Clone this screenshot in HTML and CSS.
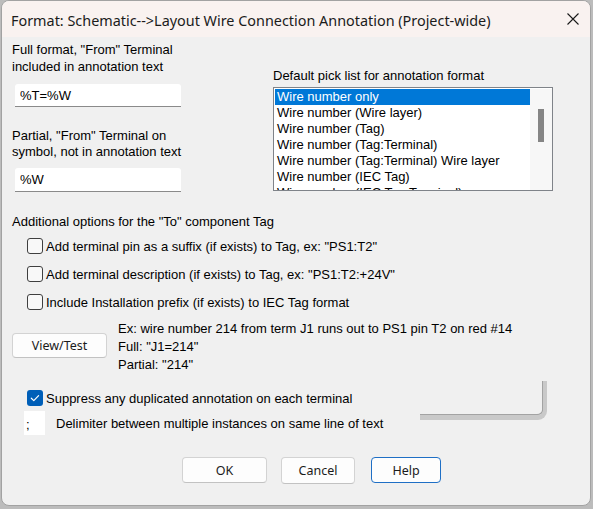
FILE: index.html
```html
<!DOCTYPE html>
<html>
<head>
<meta charset="utf-8">
<link rel="stylesheet" href="styles.css">
<title>Wire Connection Annotation</title>
</head>
<body>
<div class="window">
  <div class="titlebar">
    <span class="title">Format: Schematic--&gt;Layout Wire Connection Annotation (Project-wide)</span>
    <svg class="close" width="12" height="12" viewBox="0 0 12 12"><path d="M0.5 0.5 L11.5 11.5 M11.5 0.5 L0.5 11.5" stroke="#1a1a1a" stroke-width="1.1" fill="none"/></svg>
  </div>

  <div class="content">
    <div class="formats">
      <div class="col-left">
        <div class="label label-full">Full format, "From" Terminal<br>included in annotation text</div>
        <input class="field field-full" type="text" value="%T=%W">
        <div class="label label-partial">Partial, "From" Terminal on<br>symbol, not in annotation text</div>
        <input class="field field-partial" type="text" value="%W">
      </div>
      <div class="col-right">
        <div class="label label-pick">Default pick list for annotation format</div>
        <div class="listbox">
          <div class="rows">
            <div class="row selected">Wire number only</div>
            <div class="row">Wire number (Wire layer)</div>
            <div class="row">Wire number (Tag)</div>
            <div class="row">Wire number (Tag:Terminal)</div>
            <div class="row">Wire number (Tag:Terminal) Wire layer</div>
            <div class="row">Wire number (IEC Tag)</div>
            <div class="row">Wire number (IEC Tag:Terminal)</div>
          </div>
          <div class="scrolltrack"><div class="thumb"></div></div>
        </div>
      </div>
    </div>

    <div class="label label-options">Additional options for the "To" component Tag</div>
    <div class="options">
      <label class="check-row"><span class="box"></span><span>Add terminal pin as a suffix (if exists) to Tag, ex: "PS1:T2"</span></label>
      <label class="check-row"><span class="box"></span><span>Add terminal description (if exists) to Tag, ex: "PS1:T2:+24V"</span></label>
      <label class="check-row"><span class="box"></span><span>Include Installation prefix (if exists) to IEC Tag format</span></label>
    </div>

    <div class="example">
      <button class="btn btn-view">View/Test</button>
      <div class="example-text">
        <div>Ex: wire number 214 from term J1 runs out to PS1 pin T2 on red #14</div>
        <div>Full: "J1=214"</div>
        <div>Partial: "214"</div>
      </div>
    </div>

    <div class="lower">
      <div class="lower-left">
        <label class="check-row check-suppress">
          <span class="box checked"><svg width="16" height="16" viewBox="0 0 16 16"><path d="M4.3 8.2 L6.8 10.6 L11.6 5.6" stroke="#fff" stroke-width="1.2" fill="none" stroke-linecap="round" stroke-linejoin="round"/></svg></span>
          <span>Suppress any duplicated annotation on each terminal</span>
        </label>
        <div class="delim-row">
          <input class="field field-delim" type="text" value=";">
          <span>Delimiter between multiple instances on same line of text</span>
        </div>
      </div>
      <div class="frame"></div>
    </div>

    <div class="actions">
      <button class="btn btn-ok">OK</button>
      <button class="btn btn-cancel">Cancel</button>
      <button class="btn btn-help">Help</button>
    </div>
  </div>
</div>
</body>
</html>
```

FILE: styles.css
```css
html, body {
  margin: 0;
  padding: 0;
}

body {
  width: 593px;
  height: 509px;
  background: #bcbcbc;
  font-family: "Liberation Sans", Arial, sans-serif;
  font-size: 13px;
  color: #000;
  overflow: hidden;
}

.window {
  box-sizing: border-box;
  width: 590px;
  height: 506px;
  margin-left: 1px;
  border: 1px solid #a2a2a2;
  border-radius: 8px;
  background: #f0f0f0;
  overflow: hidden;
}

/* caption bar */
.titlebar {
  height: 36px;
  background: #f9f2f0;
  display: flex;
  align-items: center;
  padding-left: 9px;
  padding-right: 11px;
}

.title {
  flex: 1;
  font-family: "Noto Sans", "Open Sans", sans-serif;
  font-size: 14.4px;
  color: #1b1b1b;
  padding-top: 2px;
  white-space: nowrap;
}

.close {
  display: block;
}

/* dialog body */
.content {
  padding-left: 10px;
}

.label {
  line-height: 16px;
  white-space: nowrap;
}

.formats {
  display: flex;
}

.col-left {
  width: 261px;
}

.label-full {
  margin-top: 4px;
  line-height: 17px;
}

.label-partial {
  margin-top: 21px;
}

.field {
  display: block;
  box-sizing: border-box;
  margin: 0;
  border: none;
  border-bottom: 1px solid #8a8a8a;
  border-radius: 3px 3px 0 0;
  background: #fff;
  font-family: "Liberation Sans", Arial, sans-serif;
  font-size: 13px;
  color: #000;
  outline: none;
}

.field-full {
  margin: 9px 0 0 3px;
  width: 166px;
  height: 23px;
  padding: 0 0 0 5px;
}

.field-partial {
  margin: 8px 0 0 3px;
  width: 166px;
  height: 24px;
  padding: 0 0 0 5px;
}

.label-pick {
  margin-top: 31px;
}

.listbox {
  box-sizing: border-box;
  margin-top: 3px;
  width: 280px;
  height: 104px;
  border: 1px solid #7f8389;
  background: #fff;
  padding: 1px 0 0 1px;
  display: flex;
  overflow: hidden;
}

.rows {
  width: 255px;
}

.row {
  height: 16px;
  line-height: 16px;
  padding-left: 2px;
  white-space: nowrap;
}

.row.selected {
  background: #0078d7;
  color: #fff;
}

.scrolltrack {
  flex: 1;
  background: #f7f7f7;
}

.thumb {
  margin: 20px 0 0 8px;
  width: 6px;
  height: 33px;
  background: #858585;
}

/* tag options */
.label-options {
  margin-top: 22px;
}

.options {
  margin-top: 8px;
  display: flex;
  flex-direction: column;
  gap: 12px;
}

.check-row {
  display: flex;
  align-items: center;
  height: 16px;
  padding-left: 15px;
  gap: 3px;
  white-space: nowrap;
}

.box {
  box-sizing: border-box;
  width: 16px;
  height: 16px;
  border: 1px solid #3f3f3f;
  border-radius: 3px;
  background: #f8f8f8;
  flex: none;
}

.box.checked {
  border: none;
  background: #005fb8;
}

.box.checked svg {
  display: block;
}

/* view / test */
.example {
  margin-top: 10px;
  display: flex;
  align-items: flex-start;
  gap: 11px;
}

.example-text {
  line-height: 18px;
  white-space: nowrap;
}

.btn {
  box-sizing: border-box;
  margin: 0;
  height: 26px;
  border: 1px solid #d3d3d3;
  border-bottom-color: #c2c2c2;
  border-radius: 4px;
  background: #fdfdfd;
  font-family: "Noto Sans", "Open Sans", sans-serif;
  font-size: 12.5px;
  color: #1b1b1b;
  padding: 0;
}

.btn-view {
  margin-top: 13px;
  width: 95px;
  height: 25px;
}

/* suppress + delimiter */
.lower {
  margin-top: 7px;
  display: flex;
  align-items: flex-start;
}

.lower-left {
  width: 408px;
  padding-top: 9px;
}

.delim-row {
  margin-top: 5px;
  display: flex;
  align-items: center;
  gap: 11px;
  white-space: nowrap;
}

.field-delim {
  margin-left: 12px;
  width: 21px;
  height: 24px;
  padding: 2px 0 0 2px;
  border-bottom: none;
  border-radius: 0;
}

.frame {
  box-sizing: border-box;
  width: 127px;
  height: 39px;
  border-right: 4px solid #c9c9c9;
  border-bottom: 5px solid #c9c9c9;
  border-bottom-right-radius: 9px;
  box-shadow: inset -1px -1px 0 #a3a3a3;
}

/* dialog buttons */
.actions {
  margin-top: 22px;
  padding-left: 170px;
  display: flex;
}

.btn-ok {
  width: 85px;
}

.btn-cancel {
  margin-left: 14px;
  width: 74px;
  height: 27px;
}

.btn-help {
  margin-left: 16px;
  width: 70px;
  border: 1px solid #1f6fc5;
}
```
